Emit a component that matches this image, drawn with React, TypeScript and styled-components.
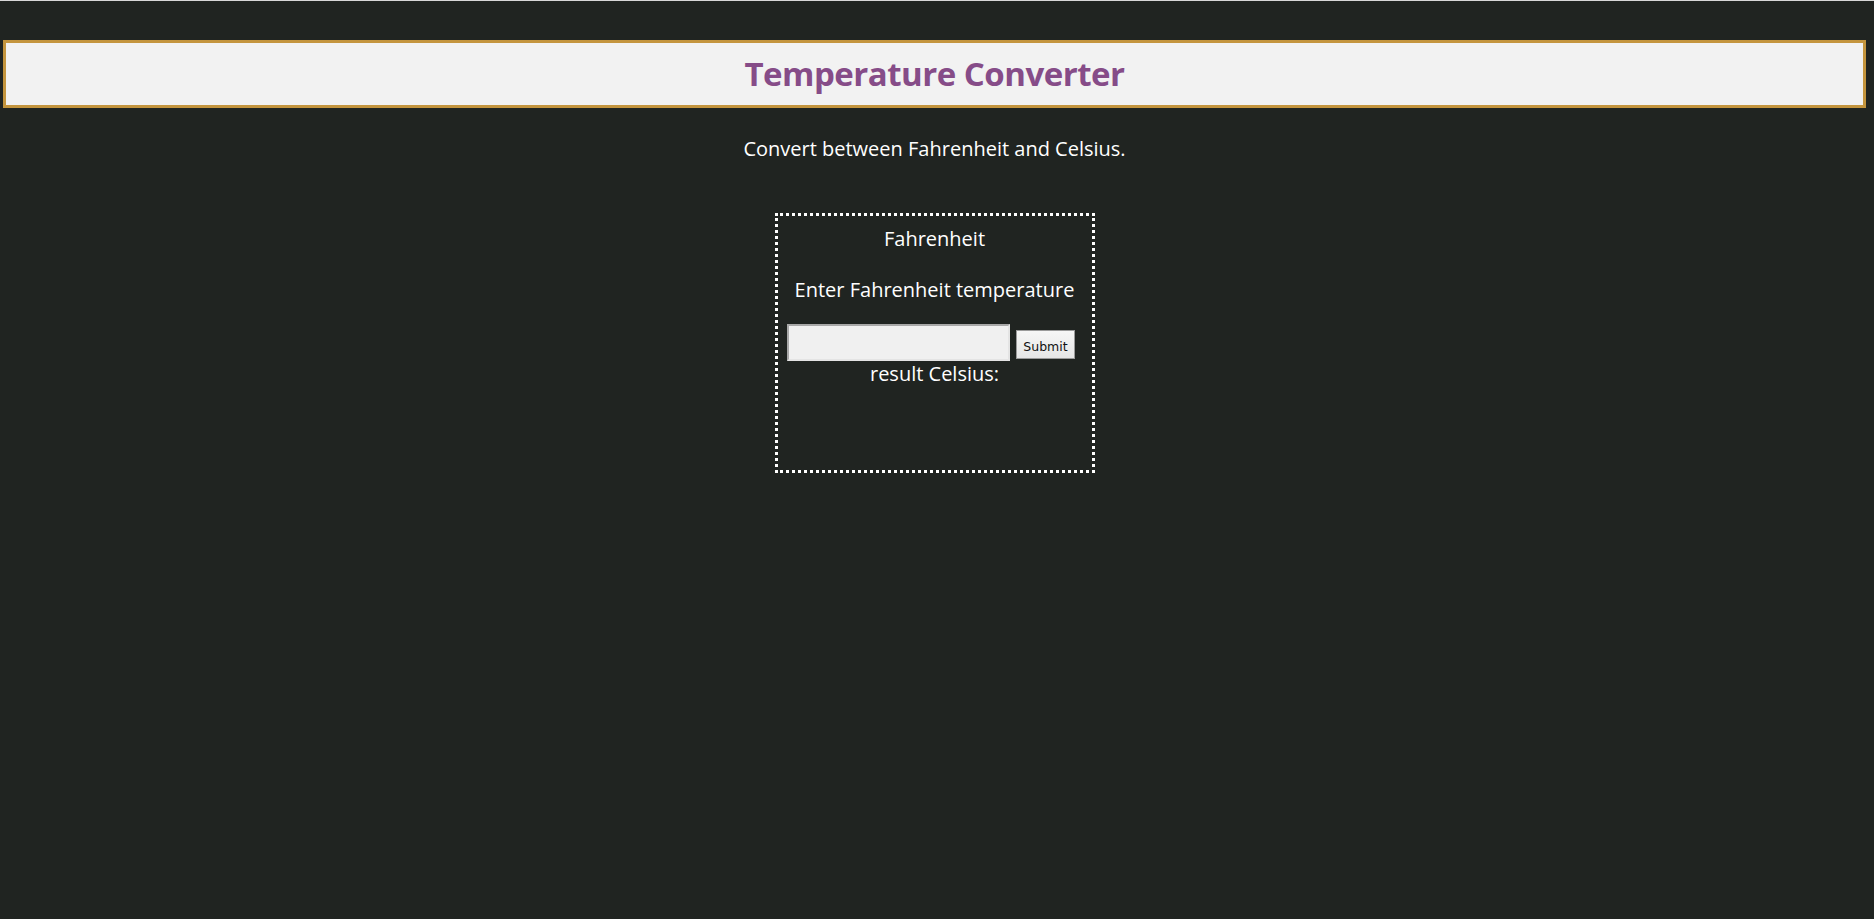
import * as React from 'react';
import styled, { createGlobalStyle } from 'styled-components';

const palette = {
  page: '#202421',
  paper: '#f2f2f2',
  gold: '#c4953e',
  plum: '#864c88',
  text: '#ffffff',
};

const GlobalStyle = createGlobalStyle`
  html {
    border-top: 1px solid #d8d8d8;
    background: ${palette.page};
  }
  body {
    margin: 0;
    background: ${palette.page};
    color: ${palette.text};
    font-family: 'Open Sans', 'Noto Sans', sans-serif;
  }
`;

const Page = styled.main`
  padding: 39px 8px 0 3px;
`;

const Header = styled.header`
  height: 68px;
  box-sizing: border-box;
  border: 3px solid ${palette.gold};
  background: ${palette.paper};
  display: flex;
  align-items: center;
  justify-content: center;

  h1 {
    margin: 0;
    font-size: 33px;
    letter-spacing: -0.5px;
    line-height: 62px;
    font-weight: 700;
    color: ${palette.plum};
  }
`;

const Intro = styled.p`
  margin: 29px 0 0;
  text-align: center;
  font-size: 20px;
  line-height: 24px;
`;

const Converter = styled.section`
  width: 320px;
  height: 260px;
  box-sizing: border-box;
  margin: 52px auto 0;
  padding: 11px 6px 0;
  border: 3px dotted #ffffff;
  display: flex;
  flex-direction: column;
  align-items: center;
  text-align: center;
`;

const Line = styled.div<{ $gap?: number }>`
  margin-top: ${(p) => p.$gap ?? 0}px;
  font-size: 20px;
  line-height: 24px;
  white-space: nowrap;
`;

const InputRow = styled.form`
  display: flex;
  align-items: flex-end;
  gap: 6px;
  margin-top: 22px;
  padding-right: 7px;
`;

const TempInput = styled.input`
  width: 223px;
  height: 37px;
  box-sizing: border-box;
  margin: 0;
  border: 2px solid #a8a8a8;
  border-right-color: #e4e4e4;
  border-bottom-color: #e4e4e4;
  background: #f0f0f0;
  font-size: 16px;
  outline: none;
`;

const SubmitButton = styled.button`
  width: 59px;
  height: 29px;
  margin: 0 0 2px;
  padding: 4px 0 0;
  border: 1px solid #9a9a9a;
  background: linear-gradient(#f6f6f6, #e6e6e6);
  color: #111;
  font-family: 'DejaVu Sans', sans-serif;
  font-size: 12.5px;
  line-height: 23px;
`;

export default function App() {
  const [value, setValue] = React.useState('');
  const [result, setResult] = React.useState('');

  const handleSubmit = (e: React.FormEvent) => {
    e.preventDefault();
    const f = parseFloat(value);
    setResult(Number.isNaN(f) ? '' : (((f - 32) * 5) / 9).toFixed(2));
  };

  return (
    <>
      <GlobalStyle />
      <Page>
        <Header>
          <h1>Temperature Converter</h1>
        </Header>
        <Intro>Convert between Fahrenheit and Celsius.</Intro>
        <Converter>
          <Line>Fahrenheit</Line>
          <Line $gap={27}>Enter Fahrenheit temperature</Line>
          <InputRow onSubmit={handleSubmit}>
            <TempInput value={value} onChange={(e) => setValue(e.target.value)} />
            <SubmitButton type="submit">Submit</SubmitButton>
          </InputRow>
          <Line $gap={1}>result Celsius: {result}</Line>
        </Converter>
      </Page>
    </>
  );
}
